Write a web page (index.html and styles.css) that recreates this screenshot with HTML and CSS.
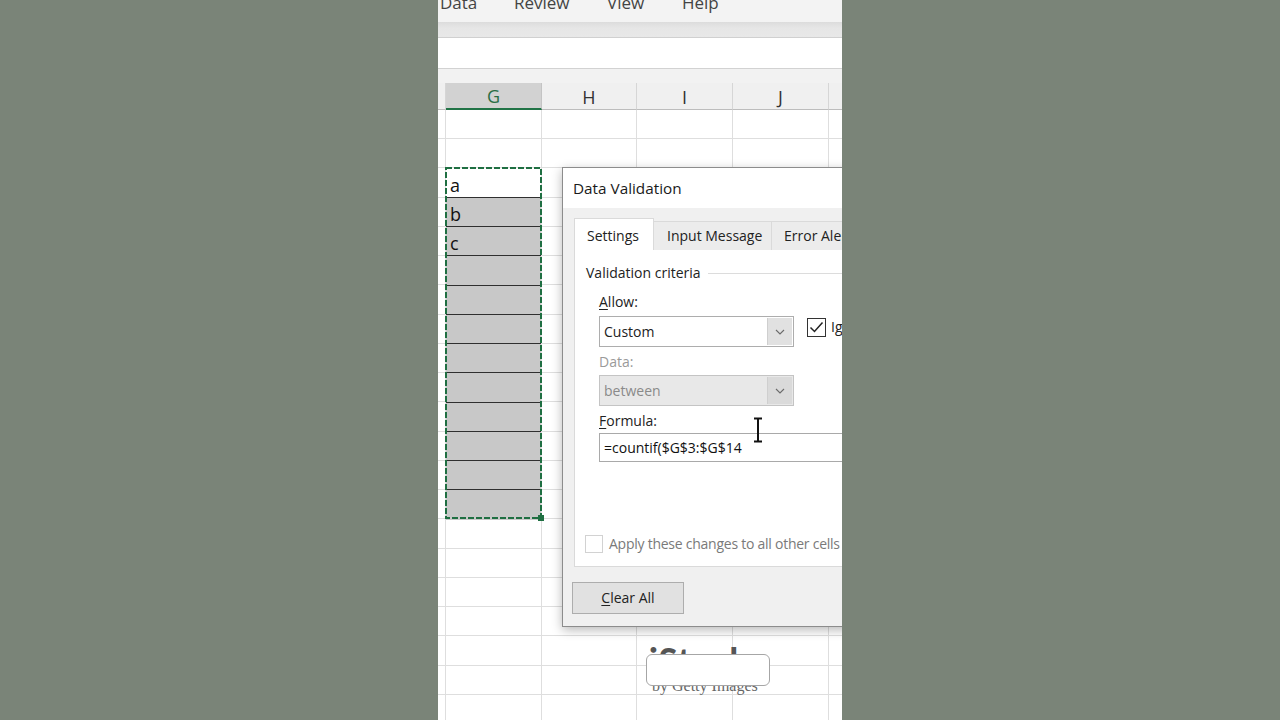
FILE: index.html
```html
<!DOCTYPE html>
<html lang="en">
<head>
<meta charset="utf-8">
<title>Data Validation</title>
<link rel="stylesheet" href="styles.css">
</head>
<body>
<div class="strip">
  <div class="ribbon">
    <span class="rtab w74">Data</span>
    <span class="rtab w93">Review</span>
    <span class="rtab w75">View</span>
    <span class="rtab">Help</span>
  </div>
  <div class="band"></div>
  <div class="fbar"></div>
  <div class="gapbar"></div>
  <div class="headers">
    <div class="hcell c0"></div>
    <div class="hcell c96 sel">G</div>
    <div class="hcell c95">H</div>
    <div class="hcell c96">I</div>
    <div class="hcell c96">J</div>
    <div class="hcell c13 last"></div>
  </div>
  <div class="sheet">
    <div class="col c0"></div>
    <div class="col c96 gcol">
      <div class="cell"></div>
      <div class="cell"></div>
      <div class="cell val white">a</div>
      <div class="cell val fill">b</div>
      <div class="cell val fill">c</div>
      <div class="cell fill"></div>
      <div class="cell fill"></div>
      <div class="cell fill"></div>
      <div class="cell fill"></div>
      <div class="cell fill"></div>
      <div class="cell fill"></div>
      <div class="cell fill"></div>
      <div class="cell fill"></div>
      <div class="cell fill endfill"></div>
    </div>
    <div class="col c95"></div>
    <div class="col c96"></div>
    <div class="col c96"></div>
    <div class="col c13 last"></div>
  </div>

  <svg class="ants" width="100" height="356" viewBox="0 0 100 356">
    <rect x="1" y="1" width="95" height="350" fill="none" stroke="#1f6f42" stroke-width="2" stroke-dasharray="6 2"/>
    <rect x="93" y="348" width="6" height="6" fill="#1f6f42"/>
  </svg>

  <div class="dialog">
    <div class="dtitle">Data Validation</div>
    <div class="dbody">
      <div class="tabs">
        <div class="tab active">Settings</div>
        <div class="tab w118">Input Message</div>
        <div class="tab">Error Alert</div>
      </div>
      <div class="panel">
        <div class="legend"><span>Validation criteria</span><span class="rule"></span></div>
        <div class="label"><u>A</u>llow:</div>
        <div class="row">
          <div class="combo">
            <span class="cval">Custom</span>
            <span class="carrow"><svg width="10" height="6" viewBox="0 0 10 6"><path d="M1 1 L5 5 L9 1" fill="none" stroke="#6b6b6b" stroke-width="1.1"/></svg></span>
          </div>
          <div class="check on"><svg width="15" height="13" viewBox="0 0 15 13"><path d="M1.5 6.5 L5.5 10.5 L13.5 1.5" fill="none" stroke="#222" stroke-width="1.5"/></svg></div>
          <span class="ctext">Ignore blank</span>
        </div>
        <div class="label dis">Data:</div>
        <div class="combo disabled">
          <span class="cval">between</span>
          <span class="carrow"><svg width="10" height="6" viewBox="0 0 10 6"><path d="M1 1 L5 5 L9 1" fill="none" stroke="#6b6b6b" stroke-width="1.1"/></svg></span>
        </div>
        <div class="label flabel"><u>F</u>ormula:</div>
        <div class="input">=countif($G$3:$G$14</div>
        <div class="apply">
          <div class="check off"></div>
          <span>Apply these changes to all other cells with the same settings</span>
        </div>
      </div>
      <div class="footer">
        <button class="btn"><u>C</u>lear All</button>
      </div>
    </div>
  </div>

  <svg class="ibeam" width="12" height="26" viewBox="0 0 12 26">
    <path d="M2 1.5 H10 M6 1.5 V24.5 M2 24.5 H10" fill="none" stroke="#111" stroke-width="2"/>
  </svg>

  <div class="wm">
    <div class="wmlogo">iStock</div>
    <div class="wmsub">by Getty Images</div>
    <div class="wmbox"></div>
  </div>
</div>
</body>
</html>
```

FILE: styles.css
```css
html, body {
  margin: 0;
  padding: 0;
  height: 100%;
}
body {
  background: #7a8478;
  display: flex;
  justify-content: center;
  overflow: hidden;
  font-family: "Open Sans", "Noto Sans", sans-serif;
}
.strip {
  position: relative;
  width: 404px;
  height: 720px;
  background: #ffffff;
  overflow: hidden;
  display: flex;
  flex-direction: column;
}

/* ribbon */
.ribbon {
  height: 22px;
  flex: none;
  background: #f3f3f3;
  display: flex;
  padding-left: 2px;
  overflow: hidden;
}
.rtab {
  font-size: 17px;
  line-height: 20px;
  margin-top: -7px;
  color: #444;
  flex: none;
}
.w74 { width: 74px; }
.w93 { width: 93px; }
.w75 { width: 75px; }

.band {
  height: 15px;
  flex: none;
  background: linear-gradient(#dcdcdc, #e6e6e6 40%, #e8e8e8);
  border-bottom: 1px solid #d0d0d0;
}
.fbar {
  height: 30px;
  flex: none;
  background: #fff;
  border-bottom: 1px solid #d2d2d2;
}
.gapbar {
  height: 14px;
  flex: none;
  background: #f2f2f2;
}

/* headers */
.headers {
  display: flex;
  height: 27px;
  flex: none;
  background: #f0f0f0;
}
.hcell {
  box-sizing: border-box;
  height: 27px;
  border-right: 1px solid #d6d6d6;
  border-bottom: 1px solid #bdbdbd;
  text-align: center;
  font-size: 18px;
  line-height: 28px;
  color: #333;
  flex: none;
}
.hcell.sel {
  background: #d2d2d2;
  color: #2a6e45;
  border-bottom: 2px solid #217346;
  border-right-color: #c4c4c4;
  line-height: 27px;
}
.c0 { width: 8px; }
.c96 { width: 96px; }
.c95 { width: 95px; }
.c13 { width: 13px; }
.hcell.last, .col.last { border-right: none; }

/* sheet */
.sheet {
  flex: 1;
  display: flex;
  background: repeating-linear-gradient(to bottom, transparent 0, transparent 28.25px, #dedede 28.25px, #dedede 29.25px);
}
.col {
  box-sizing: border-box;
  border-right: 1px solid #dedede;
  flex: none;
}
.gcol {
  display: flex;
  flex-direction: column;
}
.cell {
  box-sizing: border-box;
  height: 29.25px;
  flex: none;
}
.cell.val {
  font-size: 18px;
  line-height: 32px;
  padding-left: 4px;
  color: #111;
}
.cell.white {
  background: #fff;
  border-bottom: 1px solid #2f2f2f;
}
.cell.fill {
  background: #c8c8c8;
  border-bottom: 1px solid #2f2f2f;
}
.cell.endfill {
  border-bottom: none;
}

.ants {
  position: absolute;
  left: 7px;
  top: 167px;
}

/* dialog */
.dialog {
  position: absolute;
  left: 124px;
  top: 167px;
  width: 420px;
  border: 1px solid #8c8c8c;
  background: #f0f0f0;
  box-shadow: 0 3px 10px rgba(0, 0, 0, 0.28);
}
.dtitle {
  height: 40px;
  line-height: 40px;
  background: #fff;
  padding-left: 10px;
  font-size: 15.3px;
  color: #1a1a1a;
}
.dbody {
  padding: 10px 0 12px 11px;
}
.tabs {
  display: flex;
  align-items: flex-end;
  height: 32px;
}
.tab {
  box-sizing: border-box;
  height: 29px;
  padding: 0 12px;
  line-height: 28px;
  font-size: 14px;
  color: #222;
  border: 1px solid #dadada;
  border-bottom: none;
  border-left: none;
  background: #ececec;
  white-space: nowrap;
}
.tab.active {
  width: 80px;
  height: 32px;
  line-height: 33px;
  background: #fff;
  border-left: 1px solid #dadada;
  position: relative;
  z-index: 1;
}
.tab.w118 { width: 118px; padding-left: 13px; }

.panel {
  box-sizing: border-box;
  height: 318px;
  background: #fff;
  border: 1px solid #dadada;
  margin-top: -1px;
  padding: 13px 0 0 11px;
}
.legend {
  display: flex;
  align-items: center;
  font-size: 14px;
  line-height: 20px;
  color: #222;
}
.legend .rule {
  flex: 1;
  height: 1px;
  background: #dcdcdc;
  margin-left: 7px;
}
.label {
  margin: 9px 0 0 13px;
  font-size: 14px;
  line-height: 20px;
  color: #222;
}
.label.dis { color: #9a9a9a; margin-top: 5px; }
.label.flabel { margin-top: 5px; }
.label u { text-underline-offset: 2px; }
.row {
  display: flex;
  align-items: flex-start;
  margin-top: 4px;
}
.combo {
  box-sizing: border-box;
  width: 195px;
  height: 31px;
  margin-left: 13px;
  border: 1px solid #adadad;
  background: #fff;
  display: flex;
  align-items: stretch;
  flex: none;
}
.combo.disabled {
  background: #e8e8e8;
  border-color: #c4c4c4;
  margin-top: 3px;
}
.cval {
  flex: 1;
  padding-left: 4px;
  font-size: 14px;
  line-height: 29px;
  color: #222;
}
.combo.disabled .cval { color: #8a8a8a; }
.carrow {
  width: 24px;
  margin: 1px 1px 1px 0;
  background: #e1e1e1;
  border-left: 1px solid #cfcfcf;
  display: flex;
  align-items: center;
  justify-content: center;
}
.combo.disabled .carrow { background: #dadada; }
.check {
  box-sizing: border-box;
  width: 19px;
  height: 19px;
  border: 1px solid #333;
  background: #fff;
  display: flex;
  align-items: center;
  justify-content: center;
  flex: none;
}
.check.on {
  margin: 2px 0 0 13px;
}
.ctext {
  margin-left: 5px;
  font-size: 14px;
  line-height: 22px;
  color: #222;
  white-space: nowrap;
}
.input {
  box-sizing: border-box;
  height: 29px;
  width: 320px;
  margin: 2px 0 0 13px;
  border: 1px solid #a9a9a9;
  padding-left: 4px;
  font-size: 14px;
  line-height: 27px;
  color: #111;
}
.apply {
  display: flex;
  align-items: center;
  margin-top: 72px;
  white-space: nowrap;
}
.check.off {
  width: 18px;
  height: 18px;
  border-color: #d2d2d2;
  margin-left: -1px;
}
.apply span {
  margin-left: 6px;
  font-size: 14px;
  letter-spacing: -0.25px;
  color: #7a7a7a;
}
.footer {
  padding-top: 15px;
}
.btn {
  box-sizing: border-box;
  width: 112px;
  height: 32px;
  margin-left: -2px;
  background: #e1e1e1;
  border: 1px solid #adadad;
  font-family: "Open Sans", "Noto Sans", sans-serif;
  font-size: 14px;
  line-height: 30px;
  color: #222;
  padding: 0;
  display: block;
}
.btn u { text-underline-offset: 2px; }

.ibeam {
  position: absolute;
  left: 314px;
  top: 417px;
}

/* watermark */
.wm {
  position: absolute;
  left: 208px;
  top: 640px;
  width: 130px;
  height: 60px;
}
.wmlogo {
  position: absolute;
  left: 3px;
  top: -4px;
  font-family: "Lato", sans-serif;
  font-weight: 900;
  font-size: 34px;
  line-height: 48px;
  color: #555;
  letter-spacing: 1px;
}
.wmsub {
  position: absolute;
  left: 6px;
  top: 37px;
  font-family: "Liberation Serif", serif;
  font-size: 16px;
  line-height: 18px;
  color: #666;
  white-space: nowrap;
}
.wmbox {
  position: absolute;
  left: 0;
  top: 14px;
  width: 122px;
  height: 30px;
  background: #fff;
  border: 1px solid #a6a6a6;
  border-radius: 6px;
}
```
